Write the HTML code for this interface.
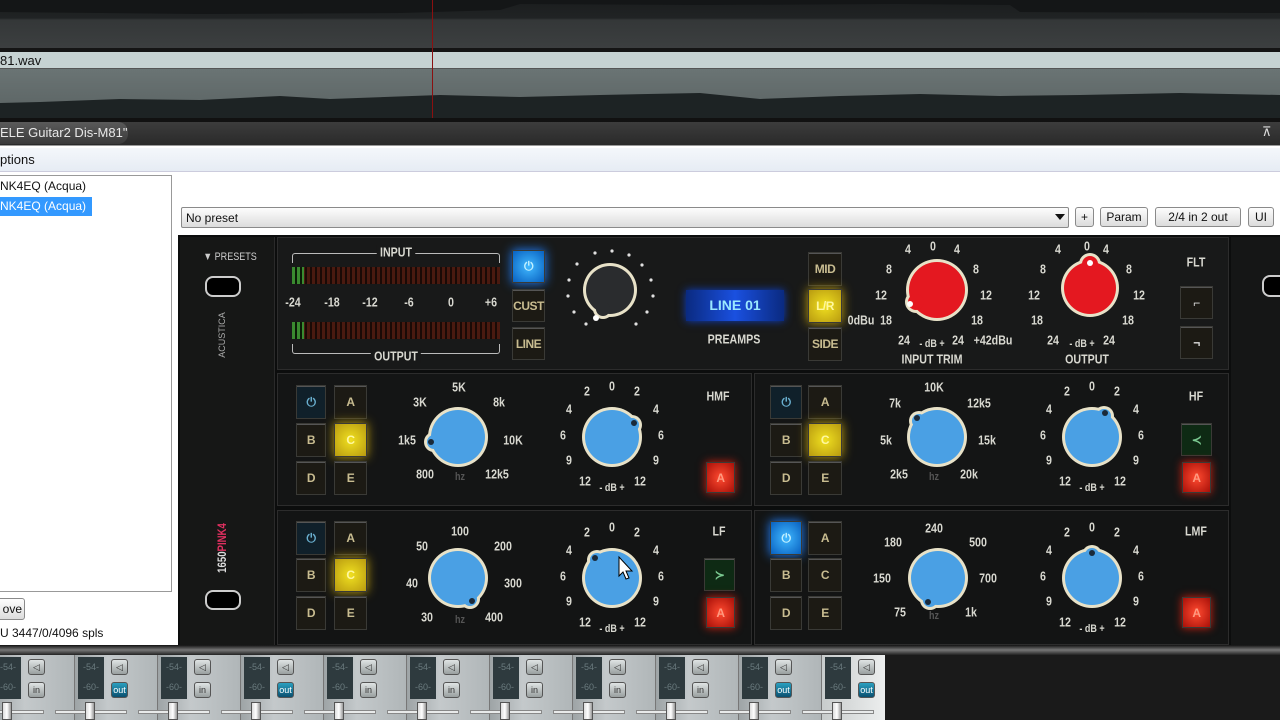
<!DOCTYPE html>
<html><head><meta charset="utf-8"><style>
*{margin:0;padding:0;box-sizing:border-box}
body{width:1280px;height:720px;overflow:hidden;position:relative;background:#fff;font-family:"Liberation Sans",sans-serif}
.a{position:absolute}
.t{position:absolute;transform:translate(-50%,-50%) scaleX(.82);color:#d8d8d0;font-family:"Liberation Sans Narrow","Liberation Sans",sans-serif;font-weight:bold;font-size:13px;white-space:nowrap}
.btn{position:absolute;background:#1c1a14;border:1px solid #3a3a36;box-shadow:inset 0 1px 0 #555;color:#c8bc90;font-family:"Liberation Sans Narrow","Liberation Sans",sans-serif;font-weight:bold;font-size:12px;display:flex;align-items:center;justify-content:center;letter-spacing:-.5px}
.y{background:radial-gradient(#f0e020,#b89a10);color:#fff8a0;box-shadow:0 0 10px #c0a010}
.r{background:radial-gradient(#ff4a30,#a81008);color:#ff9a80;box-shadow:0 0 8px #d02010}
.g{background:#0e2a14;color:#7ac890}
.pb{background:#10202a;color:#6ab0d0}
.pbon{background:radial-gradient(#40b8ff,#0860c0);color:#c0f0ff;box-shadow:0 0 10px #2080ff}
.wb{position:absolute;border:1px solid #8a8a8a;border-radius:3px;background:linear-gradient(#fdfdfd,#dcdcdc);font-size:12px;color:#111;display:flex;align-items:center;justify-content:center}
.strip{position:absolute;top:655px;height:65px;width:83px;background:linear-gradient(90deg,#9ea4a6,#c4c9cb 40%,#b0b6b8);border-left:1px solid #777}
.mb{position:absolute;left:3px;top:2px;width:26px;height:42px;background:#2e3a3e;color:#6a7a7e;font-size:9px;text-align:center;line-height:20px}
.sb{position:absolute;left:36px;width:17px;height:16px;border:1px solid #555;border-radius:3px;background:linear-gradient(#e0e4e4,#9aa0a0);font-size:9px;color:#333;text-align:center;line-height:14px}
.ob{background:linear-gradient(#2aa0c0,#0a5070);color:#fff}
.fg{position:absolute;left:-20px;top:55px;width:72px;height:4px;background:#e8eaea;border:1px solid #888}
.fk{position:absolute;left:10px;top:47px;width:10px;height:18px;background:linear-gradient(90deg,#ddd,#fff,#999);border:1px solid #555}
</style></head><body>
<div class="a" style="left:0;top:0;width:1280px;height:48px;background:linear-gradient(#1b1d1e 0,#202324 18px,#343738 20px,#3c3f40 48px)"></div>
<svg class="a" style="left:0;top:0" width="1280" height="48"><path d="M0 0 L0 12 L200 14 L400 13 L500 10 L520 4 L700 5 L900 4 L1010 5 L1020 12 L1280 13 L1280 0Z" fill="#141617"/></svg>
<div class="a" style="left:0;top:48px;width:1280px;height:4px;background:#151515"></div>
<div class="a" style="left:0;top:52px;width:1280px;height:17px;background:#c6d2d2;border-bottom:1px solid #555"></div>
<div class="a" style="left:0;top:53px;font-size:13px;color:#111">81.wav</div>
<div class="a" style="left:0;top:69px;width:1280px;height:49px;background:linear-gradient(#6a7474,#5a6262)"></div>
<svg class="a" style="left:0;top:69px" width="1280" height="49"><path d="M0 49 L0 34 L40 33 L120 30 L200 31 L280 27 L330 30 L440 26 L520 28 L600 26 L700 24 L760 30 L840 27 L920 25 L1000 27 L1080 26 L1180 24 L1280 26 L1280 49Z" fill="#1d2324"/></svg>
<div class="a" style="left:432px;top:0;width:1px;height:118px;background:#8a1010"></div>
<div class="a" style="left:0;top:118px;width:1280px;height:4px;background:#111"></div>
<div class="a" style="left:0;top:122px;width:1280px;height:23px;background:linear-gradient(#3c3c3c,#2a2a2a)"></div>
<div class="a" style="left:0;top:122px;width:128px;height:22px;background:linear-gradient(#5a5a5a,#3a3a3a);border-radius:0 10px 10px 0"></div>
<div class="a" style="left:0;top:125px;font-size:13px;color:#e8e8e8">ELE Guitar2 Dis-M81"</div>
<div class="a" style="left:1262px;top:124px;color:#ddd;font-size:13px">⊼</div>
<div class="a" style="left:0;top:145px;width:1280px;height:3px;background:#fff;border-top:1px solid #999"></div>
<div class="a" style="left:0;top:148px;width:1280px;height:24px;background:linear-gradient(#f4f7fb,#e6ecf4);border-bottom:1px solid #ccd"></div>
<div class="a" style="left:0;top:152px;font-size:13px;color:#111">ptions</div>
<div class="a" style="left:-2px;top:175px;width:174px;height:417px;border:1px solid #999;background:#fff"></div>
<div class="a" style="left:0;top:179px;font-size:12px;color:#111">NK4EQ (Acqua)</div>
<div class="a" style="left:0;top:197px;width:92px;height:19px;background:#3399ff"></div>
<div class="a" style="left:0;top:199px;font-size:12px;color:#fff">NK4EQ (Acqua)</div>
<div class="wb" style="left:-4px;top:598px;width:29px;height:22px;justify-content:flex-end;padding-right:2px">ove</div>
<div class="a" style="left:0;top:626px;font-size:12px;color:#111">U 3447/0/4096 spls</div>
<div class="wb" style="left:181px;top:207px;width:888px;height:21px;justify-content:flex-start;padding-left:4px;border-radius:2px">No preset</div>
<div class="a" style="left:1055px;top:214px;width:0;height:0;border-left:5px solid transparent;border-right:5px solid transparent;border-top:6px solid #111"></div>
<div class="wb" style="left:1075px;top:207px;width:19px;height:20px">+</div>
<div class="wb" style="left:1100px;top:207px;width:48px;height:20px">Param</div>
<div class="wb" style="left:1155px;top:207px;width:86px;height:20px">2/4 in 2 out</div>
<div class="wb" style="left:1248px;top:207px;width:26px;height:20px">UI</div>
<div class="a" style="left:178px;top:235px;width:1102px;height:412px;background:#0c0d0d"></div>
<div class="a" style="left:180px;top:237px;width:95px;height:408px;background:#161716;border-right:1px solid #2a2a2a"></div>
<div class="a" style="left:277px;top:237px;width:952px;height:133px;background:#181919;border:1px solid #2c2c2c"></div>
<div class="a" style="left:277px;top:373px;width:475px;height:133px;background:#141515;border:1px solid #2c2c2c"></div>
<div class="a" style="left:754px;top:373px;width:475px;height:133px;background:#141515;border:1px solid #2c2c2c"></div>
<div class="a" style="left:277px;top:510px;width:475px;height:135px;background:#131414;border:1px solid #2c2c2c"></div>
<div class="a" style="left:754px;top:510px;width:475px;height:135px;background:#131414;border:1px solid #2c2c2c"></div>
<div class="a" style="left:1231px;top:237px;width:49px;height:408px;background:#151616"></div>
<div class="a" style="left:1262px;top:275px;width:20px;height:22px;border:2px solid #ccc;border-right:none;border-radius:8px 0 0 8px;background:#000"></div>
<div class="t" style="left:230px;top:257px;font-size:11px;font-weight:normal;color:#ccc">▼ PRESETS</div>
<div class="a" style="left:205px;top:276px;width:36px;height:21px;border:2px solid #ccc;border-radius:8px;background:#000"></div>
<div class="t" style="left:222px;top:335px;transform:translate(-50%,-50%) rotate(-90deg);font-size:9px;color:#aaa;font-weight:normal">ACUSTICA</div>
<div class="t" style="left:222px;top:548px;transform:translate(-50%,-50%) rotate(-90deg) scaleX(.8);font-size:12px;color:#ddd">1650<span style="color:#e03060">PINK4</span></div>
<div class="a" style="left:205px;top:590px;width:36px;height:20px;border:2px solid #ccc;border-radius:8px;background:#000"></div>
<div class="a" style="left:292px;top:267px;width:208px;height:17px;background:repeating-linear-gradient(90deg,#4a1a10 0 3px,#1a0a06 3px 5px)"></div>
<div class="a" style="left:292px;top:267px;width:12px;height:17px;background:repeating-linear-gradient(90deg,#3a8a30 0 3px,#0a1a06 3px 5px)"></div>
<div class="a" style="left:292px;top:322px;width:208px;height:17px;background:repeating-linear-gradient(90deg,#4a1a10 0 3px,#1a0a06 3px 5px)"></div>
<div class="a" style="left:292px;top:322px;width:12px;height:17px;background:repeating-linear-gradient(90deg,#3a8a30 0 3px,#0a1a06 3px 5px)"></div>
<div class="a" style="left:292px;top:253px;width:208px;height:10px;border:1px solid #bbb;border-bottom:none;border-radius:3px 3px 0 0"></div>
<div class="a" style="left:292px;top:344px;width:208px;height:10px;border:1px solid #bbb;border-top:none;border-radius:0 0 3px 3px"></div>
<div class="t" style="left:396px;top:252px;background:#181919;padding:0 4px">INPUT</div>
<div class="t" style="left:396px;top:356px;background:#181919;padding:0 4px">OUTPUT</div>
<div class="t" style="left:293px;top:302px">-24</div><div class="t" style="left:332px;top:302px">-18</div><div class="t" style="left:370px;top:302px">-12</div><div class="t" style="left:409px;top:302px">-6</div><div class="t" style="left:451px;top:302px">0</div><div class="t" style="left:491px;top:302px">+6</div>
<div class="btn pbon" style="left:512px;top:250px;width:33px;height:33px">⏻</div>
<div class="btn" style="left:512px;top:289px;width:33px;height:33px">CUST</div>
<div class="btn" style="left:512px;top:327px;width:33px;height:33px">LINE</div>
<div class="a" style="left:686px;top:290px;width:98px;height:31px;background:linear-gradient(90deg,#0a2a80,#1a50e0 50%,#0a2a80);box-shadow:0 0 8px #1040c0;color:#9ae8ff;font-size:14px;font-weight:bold;text-align:center;line-height:31px;font-family:'Liberation Sans Narrow',sans-serif">LINE 01</div>
<div class="t" style="left:734px;top:339px">PREAMPS</div>
<div class="btn" style="left:808px;top:252px;width:34px;height:34px">MID</div>
<div class="btn y" style="left:808px;top:289px;width:34px;height:34px">L/R</div>
<div class="btn" style="left:808px;top:327px;width:34px;height:34px">SIDE</div>
<div class="t" style="left:908px;top:249px">4</div><div class="t" style="left:933px;top:246px">0</div><div class="t" style="left:957px;top:249px">4</div><div class="t" style="left:889px;top:269px">8</div><div class="t" style="left:976px;top:269px">8</div><div class="t" style="left:881px;top:295px">12</div><div class="t" style="left:986px;top:295px">12</div><div class="t" style="left:861px;top:320px">0dBu</div><div class="t" style="left:886px;top:320px">18</div><div class="t" style="left:977px;top:320px">18</div><div class="t" style="left:904px;top:340px">24</div><div class="t" style="left:958px;top:340px">24</div><div class="t" style="left:932px;top:344px;font-size:11px">- dB +</div><div class="t" style="left:993px;top:340px">+42dBu</div><div class="t" style="left:932px;top:359px">INPUT TRIM</div>
<div class="t" style="left:1058px;top:249px">4</div><div class="t" style="left:1087px;top:246px">0</div><div class="t" style="left:1106px;top:249px">4</div><div class="t" style="left:1043px;top:269px">8</div><div class="t" style="left:1129px;top:269px">8</div><div class="t" style="left:1034px;top:295px">12</div><div class="t" style="left:1139px;top:295px">12</div><div class="t" style="left:1037px;top:320px">18</div><div class="t" style="left:1128px;top:320px">18</div><div class="t" style="left:1053px;top:340px">24</div><div class="t" style="left:1109px;top:340px">24</div><div class="t" style="left:1082px;top:344px;font-size:11px">- dB +</div><div class="t" style="left:1087px;top:359px">OUTPUT</div>
<div class="t" style="left:1196px;top:262px">FLT</div>
<div class="btn" style="left:1180px;top:286px;width:33px;height:33px;color:#ddd">⌐</div>
<div class="btn" style="left:1180px;top:326px;width:33px;height:33px;color:#ddd">¬</div>
<div class="btn pb" style="left:296px;top:385px;width:30px;height:34px">⏻</div><div class="btn" style="left:334px;top:385px;width:33px;height:34px">A</div>
<div class="btn" style="left:296px;top:423px;width:30px;height:34px">B</div><div class="btn y" style="left:334px;top:423px;width:33px;height:34px">C</div>
<div class="btn" style="left:296px;top:461px;width:30px;height:34px">D</div><div class="btn" style="left:334px;top:461px;width:33px;height:34px">E</div>
<div class="btn pb" style="left:296px;top:521px;width:30px;height:34px">⏻</div><div class="btn" style="left:334px;top:521px;width:33px;height:34px">A</div>
<div class="btn" style="left:296px;top:558px;width:30px;height:34px">B</div><div class="btn y" style="left:334px;top:558px;width:33px;height:34px">C</div>
<div class="btn" style="left:296px;top:596px;width:30px;height:34px">D</div><div class="btn" style="left:334px;top:596px;width:33px;height:34px">E</div>
<div class="btn pb" style="left:770px;top:385px;width:32px;height:34px">⏻</div><div class="btn" style="left:808px;top:385px;width:34px;height:34px">A</div>
<div class="btn" style="left:770px;top:423px;width:32px;height:34px">B</div><div class="btn y" style="left:808px;top:423px;width:34px;height:34px">C</div>
<div class="btn" style="left:770px;top:461px;width:32px;height:34px">D</div><div class="btn" style="left:808px;top:461px;width:34px;height:34px">E</div>
<div class="btn pbon" style="left:770px;top:521px;width:32px;height:34px">⏻</div><div class="btn" style="left:808px;top:521px;width:34px;height:34px">A</div>
<div class="btn" style="left:770px;top:558px;width:32px;height:34px">B</div><div class="btn" style="left:808px;top:558px;width:34px;height:34px">C</div>
<div class="btn" style="left:770px;top:596px;width:32px;height:34px">D</div><div class="btn" style="left:808px;top:596px;width:34px;height:34px">E</div>
<div class="t" style="left:420px;top:402px">3K</div><div class="t" style="left:459px;top:387px">5K</div><div class="t" style="left:499px;top:402px">8k</div><div class="t" style="left:407px;top:440px">1k5</div><div class="t" style="left:513px;top:440px">10K</div><div class="t" style="left:425px;top:474px">800</div><div class="t" style="left:497px;top:474px">12k5</div><div class="t" style="left:460px;top:477px;color:#555;font-size:11px">hz</div>
<div class="t" style="left:587px;top:391px">2</div><div class="t" style="left:612px;top:386px">0</div><div class="t" style="left:637px;top:391px">2</div><div class="t" style="left:569px;top:409px">4</div><div class="t" style="left:656px;top:409px">4</div><div class="t" style="left:563px;top:435px">6</div><div class="t" style="left:661px;top:435px">6</div><div class="t" style="left:569px;top:460px">9</div><div class="t" style="left:656px;top:460px">9</div><div class="t" style="left:585px;top:481px">12</div><div class="t" style="left:640px;top:481px">12</div><div class="t" style="left:612px;top:488px;font-size:11px">- dB +</div>
<div class="t" style="left:718px;top:396px">HMF</div>
<div class="btn r" style="left:706px;top:462px;width:29px;height:31px">A</div>
<div class="t" style="left:934px;top:387px">10K</div><div class="t" style="left:895px;top:403px">7k</div><div class="t" style="left:979px;top:403px">12k5</div><div class="t" style="left:886px;top:440px">5k</div><div class="t" style="left:987px;top:440px">15k</div><div class="t" style="left:899px;top:474px">2k5</div><div class="t" style="left:969px;top:474px">20k</div><div class="t" style="left:934px;top:477px;color:#555;font-size:11px">hz</div>
<div class="t" style="left:1067px;top:391px">2</div><div class="t" style="left:1092px;top:386px">0</div><div class="t" style="left:1117px;top:391px">2</div><div class="t" style="left:1049px;top:409px">4</div><div class="t" style="left:1136px;top:409px">4</div><div class="t" style="left:1043px;top:435px">6</div><div class="t" style="left:1141px;top:435px">6</div><div class="t" style="left:1049px;top:460px">9</div><div class="t" style="left:1136px;top:460px">9</div><div class="t" style="left:1065px;top:481px">12</div><div class="t" style="left:1120px;top:481px">12</div><div class="t" style="left:1092px;top:488px;font-size:11px">- dB +</div>
<div class="t" style="left:1196px;top:396px">HF</div>
<div class="btn g" style="left:1181px;top:423px;width:31px;height:33px">≺</div>
<div class="btn r" style="left:1182px;top:462px;width:29px;height:31px">A</div>
<div class="t" style="left:460px;top:531px">100</div><div class="t" style="left:422px;top:546px">50</div><div class="t" style="left:503px;top:546px">200</div><div class="t" style="left:412px;top:583px">40</div><div class="t" style="left:513px;top:583px">300</div><div class="t" style="left:427px;top:617px">30</div><div class="t" style="left:494px;top:617px">400</div><div class="t" style="left:460px;top:620px;color:#555;font-size:11px">hz</div>
<div class="t" style="left:587px;top:532px">2</div><div class="t" style="left:612px;top:527px">0</div><div class="t" style="left:637px;top:532px">2</div><div class="t" style="left:569px;top:550px">4</div><div class="t" style="left:656px;top:550px">4</div><div class="t" style="left:563px;top:576px">6</div><div class="t" style="left:661px;top:576px">6</div><div class="t" style="left:569px;top:601px">9</div><div class="t" style="left:656px;top:601px">9</div><div class="t" style="left:585px;top:622px">12</div><div class="t" style="left:640px;top:622px">12</div><div class="t" style="left:612px;top:629px;font-size:11px">- dB +</div>
<div class="t" style="left:719px;top:531px">LF</div>
<div class="btn g" style="left:704px;top:558px;width:31px;height:33px">≻</div>
<div class="btn r" style="left:706px;top:597px;width:29px;height:31px">A</div>
<div class="t" style="left:934px;top:528px">240</div><div class="t" style="left:893px;top:542px">180</div><div class="t" style="left:978px;top:542px">500</div><div class="t" style="left:882px;top:578px">150</div><div class="t" style="left:988px;top:578px">700</div><div class="t" style="left:900px;top:612px">75</div><div class="t" style="left:971px;top:612px">1k</div><div class="t" style="left:934px;top:616px;color:#555;font-size:11px">hz</div>
<div class="t" style="left:1067px;top:532px">2</div><div class="t" style="left:1092px;top:527px">0</div><div class="t" style="left:1117px;top:532px">2</div><div class="t" style="left:1049px;top:550px">4</div><div class="t" style="left:1136px;top:550px">4</div><div class="t" style="left:1043px;top:576px">6</div><div class="t" style="left:1141px;top:576px">6</div><div class="t" style="left:1049px;top:601px">9</div><div class="t" style="left:1136px;top:601px">9</div><div class="t" style="left:1065px;top:622px">12</div><div class="t" style="left:1120px;top:622px">12</div><div class="t" style="left:1092px;top:629px;font-size:11px">- dB +</div>
<div class="t" style="left:1196px;top:531px">LMF</div>
<div class="btn r" style="left:1182px;top:597px;width:29px;height:31px">A</div>
<svg class="a" style="left:0;top:0" width="1280" height="720">
<g fill="#e0e0e0"><circle cx="595" cy="253" r="1.6"/><circle cx="612" cy="251" r="1.6"/><circle cx="629" cy="255" r="1.6"/><circle cx="642" cy="265" r="1.6"/><circle cx="651" cy="280" r="1.6"/><circle cx="653" cy="296" r="1.6"/><circle cx="647" cy="312" r="1.6"/><circle cx="636" cy="324" r="1.6"/><circle cx="577" cy="264" r="1.6"/><circle cx="569" cy="280" r="1.6"/><circle cx="568" cy="296" r="1.6"/><circle cx="574" cy="312" r="1.6"/><circle cx="586" cy="324" r="1.6"/></g>
<g fill="#e8e2c8">
<circle cx="610" cy="290" r="27"/><circle cx="603" cy="309" r="10"/>
<circle cx="937" cy="290" r="31"/><circle cx="916" cy="302" r="11"/>
<circle cx="1090" cy="288" r="29"/><circle cx="1090" cy="264" r="11"/>
<circle cx="458" cy="437" r="30"/><circle cx="434" cy="442" r="10"/>
<circle cx="612" cy="437" r="30"/><circle cx="632" cy="425" r="10"/>
<circle cx="937" cy="437" r="30"/><circle cx="919" cy="421" r="10"/>
<circle cx="1092" cy="437" r="30"/><circle cx="1104" cy="416" r="10"/>
<circle cx="458" cy="578" r="30"/><circle cx="470" cy="599" r="10"/>
<circle cx="612" cy="578" r="30"/><circle cx="597" cy="560" r="10"/>
<circle cx="938" cy="578" r="30"/><circle cx="930" cy="600" r="10"/>
<circle cx="1092" cy="578" r="30"/><circle cx="1092" cy="555" r="10"/>
</g>
<circle cx="610" cy="290" r="24" fill="#2a2c2e"/><circle cx="603" cy="309" r="7" fill="#2a2c2e"/>
<g fill="#e41820"><circle cx="937" cy="290" r="28"/><circle cx="916" cy="302" r="8"/><circle cx="1090" cy="288" r="26"/><circle cx="1090" cy="264" r="8"/></g>
<g fill="#4aa0e4">
<circle cx="458" cy="437" r="27"/><circle cx="434" cy="442" r="7"/>
<circle cx="612" cy="437" r="27"/><circle cx="632" cy="425" r="7"/>
<circle cx="937" cy="437" r="27"/><circle cx="919" cy="421" r="7"/>
<circle cx="1092" cy="437" r="27"/><circle cx="1104" cy="416" r="7"/>
<circle cx="458" cy="578" r="27"/><circle cx="470" cy="599" r="7"/>
<circle cx="612" cy="578" r="27"/><circle cx="597" cy="560" r="7"/>
<circle cx="938" cy="578" r="27"/><circle cx="930" cy="600" r="7"/>
<circle cx="1092" cy="578" r="27"/><circle cx="1092" cy="555" r="7"/>
</g>
<g fill="#fff"><circle cx="596" cy="318" r="3"/><circle cx="910" cy="304" r="3"/><circle cx="1090" cy="263" r="3"/></g>
<g fill="#1a2a3a"><circle cx="431" cy="442" r="3"/><circle cx="634" cy="423" r="3"/><circle cx="917" cy="418" r="3"/><circle cx="1105" cy="413" r="3"/><circle cx="472" cy="601" r="3"/><circle cx="595" cy="558" r="3"/><circle cx="928" cy="602" r="3"/><circle cx="1092" cy="553" r="3"/></g>
<path d="M619 557 L619 576 L623 572 L626 579 L629 578 L626 571 L632 571 Z" fill="#fff" stroke="#000" stroke-width="1"/>
</svg>
<div class="a" style="left:0;top:645px;width:1280px;height:10px;background:linear-gradient(#111,#777 50%,#222)"></div>
<div class="a" style="left:0;top:655px;width:1280px;height:65px;background:#1a1a1a"></div>
<div class="strip" style="left:-9px"><div class="mb">-54-<br>-60-</div><div class="sb" style="top:4px">◁</div><div class="sb" style="top:27px">in</div><div class="fg"></div><div class="fk"></div></div>
<div class="strip" style="left:74px"><div class="mb">-54-<br>-60-</div><div class="sb" style="top:4px">◁</div><div class="sb ob" style="top:27px">out</div><div class="fg"></div><div class="fk"></div></div>
<div class="strip" style="left:157px"><div class="mb">-54-<br>-60-</div><div class="sb" style="top:4px">◁</div><div class="sb" style="top:27px">in</div><div class="fg"></div><div class="fk"></div></div>
<div class="strip" style="left:240px"><div class="mb">-54-<br>-60-</div><div class="sb" style="top:4px">◁</div><div class="sb ob" style="top:27px">out</div><div class="fg"></div><div class="fk"></div></div>
<div class="strip" style="left:323px"><div class="mb">-54-<br>-60-</div><div class="sb" style="top:4px">◁</div><div class="sb" style="top:27px">in</div><div class="fg"></div><div class="fk"></div></div>
<div class="strip" style="left:406px"><div class="mb">-54-<br>-60-</div><div class="sb" style="top:4px">◁</div><div class="sb" style="top:27px">in</div><div class="fg"></div><div class="fk"></div></div>
<div class="strip" style="left:489px"><div class="mb">-54-<br>-60-</div><div class="sb" style="top:4px">◁</div><div class="sb" style="top:27px">in</div><div class="fg"></div><div class="fk"></div></div>
<div class="strip" style="left:572px"><div class="mb">-54-<br>-60-</div><div class="sb" style="top:4px">◁</div><div class="sb" style="top:27px">in</div><div class="fg"></div><div class="fk"></div></div>
<div class="strip" style="left:655px"><div class="mb">-54-<br>-60-</div><div class="sb" style="top:4px">◁</div><div class="sb" style="top:27px">in</div><div class="fg"></div><div class="fk"></div></div>
<div class="strip" style="left:738px"><div class="mb">-54-<br>-60-</div><div class="sb" style="top:4px">◁</div><div class="sb ob" style="top:27px">out</div><div class="fg"></div><div class="fk"></div></div>
<div class="strip" style="left:821px;width:64px;background:linear-gradient(90deg,#c8cccc,#eceeee)"><div class="mb">-54-<br>-60-</div><div class="sb" style="top:4px">◁</div><div class="sb ob" style="top:27px">out</div><div class="fg"></div><div class="fk"></div></div>
</body></html>
